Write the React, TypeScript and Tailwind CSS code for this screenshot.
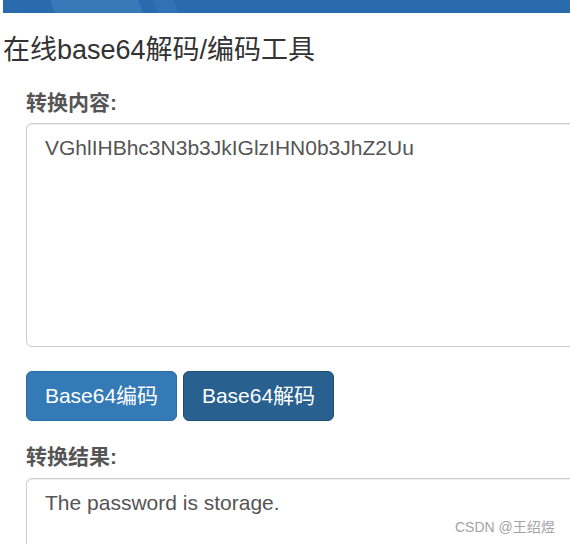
import React from "react";

export default function App() {
  const font = { fontFamily: '"Liberation Sans", "Noto Sans CJK SC", sans-serif' };
  return (
    <div
      className="relative w-[570px] h-[544px] overflow-hidden bg-white"
      style={font}
    >
      <div className="relative ml-[3px] h-[13px] bg-[#2a6bae] overflow-hidden">
        <svg className="absolute inset-0" width="567" height="13" viewBox="0 0 567 13">
          <polygon points="47,0 135,0 140,13 52,13" fill="#3a7bbb" opacity="0.9" />
          <polygon points="150,0 170,0 175,13 155,13" fill="#3374b5" opacity="0.8" />
        </svg>
      </div>

      <h3 className="ml-[3px] mt-[22px] text-[27px] leading-[30px] text-[#333]">
        在线base64解码/编码工具
      </h3>

      <div className="pl-[26px]">
        <div className="mt-[23px] text-[21px] leading-[30px] font-bold text-[#555]">
          转换内容:
        </div>
        <div className="mt-[5px] w-[620px] h-[224px] border border-[#ccc] rounded-[6px] shadow-[inset_0_1px_1px_rgba(0,0,0,0.075)] px-[18px] py-[9px] text-[21px] leading-[30px] text-[#555]">
          VGhlIHBhc3N3b3JkIGlzIHN0b3JhZ2Uu
        </div>

        <div className="mt-[24px] flex gap-[6px]">
          <div className="w-[151px] h-[50px] flex items-center justify-center rounded-[6px] border border-[#2e6da4] bg-[#337ab7] text-white text-[21px]">
            Base64编码
          </div>
          <div className="w-[151px] h-[50px] flex items-center justify-center rounded-[6px] border border-[#204d74] bg-[#286090] text-white text-[21px]">
            Base64解码
          </div>
        </div>

        <div className="mt-[21px] text-[21px] leading-[30px] font-bold text-[#555]">
          转换结果:
        </div>
        <div className="mt-[6px] w-[620px] h-[224px] border border-[#ccc] rounded-[6px] shadow-[inset_0_1px_1px_rgba(0,0,0,0.075)] px-[18px] py-[9px] text-[21px] leading-[30px] text-[#555]">
          The password is storage.
        </div>
      </div>

      <div className="absolute left-[455px] top-[518px] text-[14px] leading-[18px] text-[#a3a3a3]">
        CSDN @王绍煜
      </div>
    </div>
  );
}
